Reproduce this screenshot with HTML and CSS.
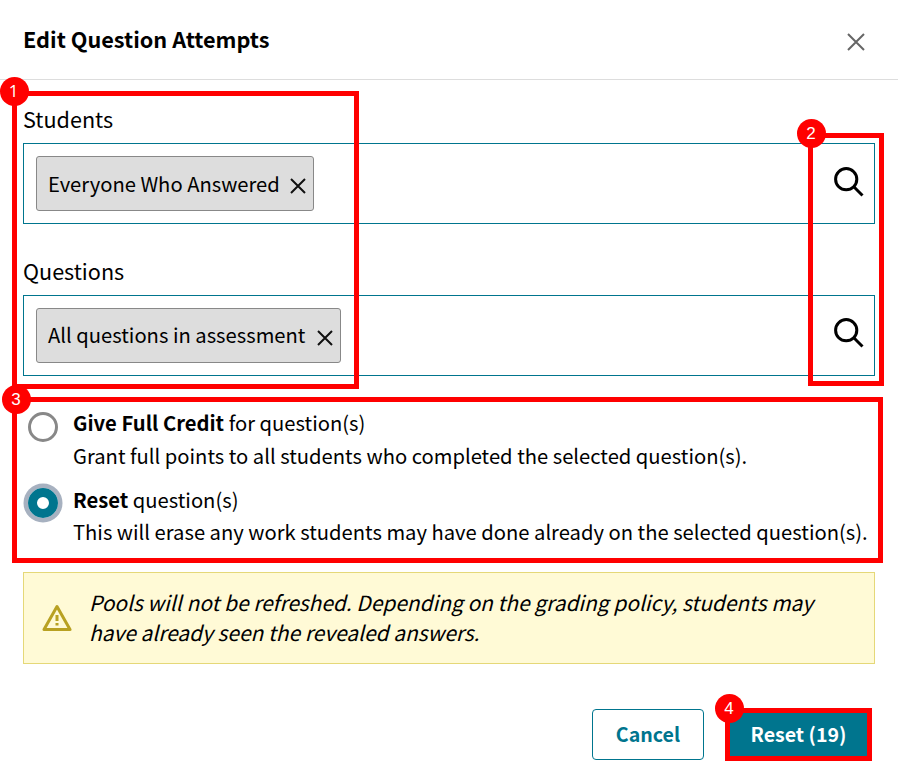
FILE: index.html
```html
<!DOCTYPE html>
<html lang="en">
  <head>
    <meta charset="utf-8" />
    <title>Edit Question Attempts</title>
    <link rel="stylesheet" href="styles.css">
  </head>
  <body>

<div class="dialog">
  <header class="dialog-header">
    <h1>Edit Question Attempts</h1>
    <button class="close" aria-label="Close">
      <svg width="18" height="18" viewBox="0 0 18 18"><path d="M1 1L17 17M17 1L1 17"/></svg>
    </button>
  </header>

  <main class="dialog-body">
    <div class="label">Students</div>
    <div class="field">
      <div class="chip">
        <span>Everyone Who Answered</span>
        <svg width="16" height="16" viewBox="0 0 16 16"><path d="M1 1L15 15M15 1L1 15"/></svg>
      </div>
      <svg class="search" width="30" height="30" viewBox="0 0 30 30"><circle cx="12.2" cy="12.2" r="10.6"/><path d="M19.8 19.8L28.5 28.5"/></svg>
    </div>

    <div class="label label-questions">Questions</div>
    <div class="field field-questions">
      <div class="chip chip-all">
        <span>All questions in assessment</span>
        <svg width="16" height="16" viewBox="0 0 16 16"><path d="M1 1L15 15M15 1L1 15"/></svg>
      </div>
      <svg class="search" width="30" height="30" viewBox="0 0 30 30"><circle cx="12.2" cy="12.2" r="10.6"/><path d="M19.8 19.8L28.5 28.5"/></svg>
    </div>

    <div class="options">
      <div class="option">
        <span class="radio"></span>
        <div class="option-text">
          <p><b>Give Full Credit</b> for question(s)</p>
          <p>Grant full points to all students who completed the selected question(s).</p>
        </div>
      </div>
      <div class="option">
        <span class="radio checked"></span>
        <div class="option-text">
          <p><b>Reset</b> question(s)</p>
          <p>This will erase any work students may have done already on the selected question(s).</p>
        </div>
      </div>
    </div>

    <div class="alert">
      <svg width="30" height="28" viewBox="0 0 30 28"><path class="tri" d="M15 2.5L28 25.5H2Z"/><path class="mark" d="M15 11V17M15 19V21.5"/></svg>
      <p>Pools will not be refreshed. Depending on the grading policy, students may<br>have already seen the revealed answers.</p>
    </div>
  </main>

  <footer class="dialog-footer">
    <button class="btn">Cancel</button>
    <button class="btn btn-primary">Reset (19)</button>
  </footer>

  <!-- numbered callouts -->
  <div class="callout one"><span class="badge">1</span></div>
  <div class="callout two"><span class="badge">2</span></div>
  <div class="callout three"><span class="badge">3</span></div>
  <div class="callout four"><span class="badge">4</span></div>
</div>

  </body>
</html>
```
FILE: styles.css
```css
*{
	box-sizing: border-box;
}

body{
	margin: 0;
	background-color: #fff;
	color: #000;
	font-family: "Noto Sans CJK SC", "Noto Sans", sans-serif;
	font-size: 20.2px;
}

h1, p{
	margin: 0;
	white-space: nowrap;
}

svg{
	display: block;
	flex: none;
	fill: none;
	stroke: #111;
	stroke-width: 2;
}

span{
	white-space: nowrap;
}

button{
	font: inherit;
	background: none;
	border: 0;
	padding: 0;
}

.dialog{
	position: relative;
	height: 781px;
	overflow: hidden;
}

.dialog-header{
	display: flex;
	align-items: center;
	justify-content: space-between;
	height: 80px;
	padding: 2px 33.5px 0 23px;
	border-bottom: 1px solid #ddd;
}

h1{
	font-size: 21.7px;
	line-height: 30px;
	margin-bottom: 4px;
}

.close svg{
	margin-top: 2px;
	stroke: #666;
}

.dialog-body{
	padding: 25px 23px 0;
}

.label{
	height: 38px;
	font-size: 21.6px;
	line-height: 27px;
}

.label-questions{
	margin-top: 33px;
}

.field{
	display: flex;
	align-items: center;
	justify-content: space-between;
	height: 81px;
	padding: 0 10px 0 12px;
	border: 1px solid #00758e;
}

.chip{
	display: flex;
	align-items: center;
	justify-content: space-between;
	width: 278px;
	height: 55px;
	padding: 0 7px 0 11px;
	border: 1px solid #888;
	border-radius: 3px;
	background-color: #ddd;
}

.chip-all{
	width: 305px;
}

.chip-all span{
	margin-top: -2px;
}

.chip svg{
	margin-top: 5px;
}

.search{
	margin-top: -4px;
	stroke: #000;
	stroke-width: 3;
}

.field-questions .search{
	margin-top: -6px;
}

.options{
	padding: 33px 0 0 5px;
}

.option{
	display: flex;
	height: 76px;
	gap: 15px;
}

.radio{
	flex: none;
	width: 30px;
	height: 30px;
	margin-top: 3px;
	border: 3px solid #888;
	border-radius: 50%;
}

.radio.checked{
	border: 9px solid #00758e;
	box-shadow: 0 0 0 4.5px #a7b1c0;
}

.option-text p{
	height: 32px;
	line-height: 30px;
}

.option:first-child p:first-child{
	line-height: 28px;
}

.alert{
	display: flex;
	align-items: center;
	gap: 17px;
	height: 92px;
	margin-top: 11px;
	padding-left: 18px;
	border: 1px solid #e5d878;
	background-color: #fffad6;
	font-size: 20.9px;
	font-style: italic;
	line-height: 30px;
}

.alert p{
	margin-top: -2px;
}

.alert svg{
	stroke: #b8a122;
}

.tri{
	stroke-width: 3;
	stroke-linejoin: round;
}

.mark{
	stroke-width: 3;
}

.dialog-footer{
	display: flex;
	justify-content: flex-end;
	gap: 22px;
	padding: 45px 27px 0 0;
}

.btn{
	width: 112px;
	height: 51px;
	padding-bottom: 2px;
	border: 1px solid #00758e;
	border-radius: 4px;
	color: #00758e;
	font-size: 19.6px;
	font-weight: bold;
}

.btn-primary{
	width: 145px;
	background-color: #00758e;
	color: #fff;
}

.callout{
	position: absolute;
	border: 5px solid #f00;
}

.one{
	left: 12px;
	top: 91px;
	width: 347px;
	height: 298px;
}

.two{
	left: 808px;
	top: 133px;
	width: 76px;
	height: 253px;
}

.three{
	left: 12px;
	top: 397px;
	width: 871px;
	height: 166px;
}

.four{
	left: 725px;
	top: 708px;
	width: 147px;
	height: 53px;
}

.badge{
	position: absolute;
	left: -17px;
	top: -19px;
	width: 29px;
	height: 29px;
	padding-right: 1px;
	border-radius: 50%;
	background-color: #f00;
	color: #fff;
	font: 17px/29px "Liberation Sans", sans-serif;
	text-align: center;
}

.one .badge{
	font-family: "Open Sans", sans-serif;
	line-height: 28px;
	padding-right: 2px;
}

.two .badge{
	left: -16px;
}

.three .badge{
	left: -15px;
	top: -17px;
}

.four .badge{
	left: -15px;
}
```
